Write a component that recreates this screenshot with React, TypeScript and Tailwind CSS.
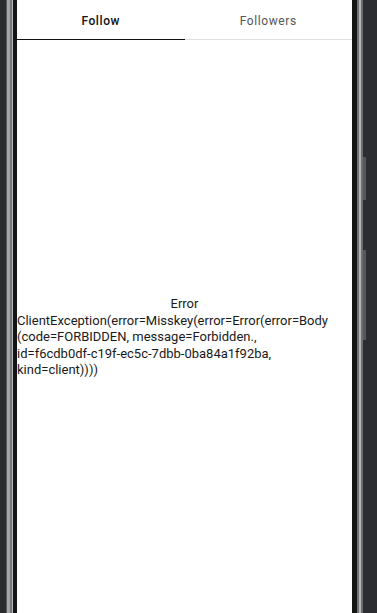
import React from 'react'

const errorLines = [
  'ClientException(error=Misskey(error=Error(error=Body',
  '(code=FORBIDDEN, message=Forbidden.,',
  'id=f6cdb0df-c19f-ec5c-7dbb-0ba84a1f92ba,',
  'kind=client))))',
]

const LeftBezel = () => (
  <div className="flex h-full shrink-0">
    <div className="w-[6px] bg-[#2b2c2f]" />
    <div className="w-[1px] bg-[#5a5b5d]" />
    <div className="w-[3px] bg-[#a4a5a6]" />
    <div className="w-[2px] bg-[#76777a]" />
    <div className="w-[1px] bg-[#b9babb]" />
    <div className="w-[4px] bg-[#151515]" />
  </div>
)

const RightBezel = () => (
  <div className="flex h-full shrink-0">
    <div className="w-[5px] bg-[#151515]" />
    <div className="w-[2px] bg-[#707174]" />
    <div className="w-[2px] bg-[#b4b5b6]" />
    <div className="w-[2px] bg-[#6c6d70]" />
    <div className="relative w-[14px] bg-[#2b2d30]">
      {/* side buttons */}
      <div className="absolute left-0 top-[157px] h-[43px] w-[3px] bg-[#55575a]" />
      <div className="absolute left-0 top-[250px] h-[90px] w-[3px] bg-[#55575a]" />
    </div>
  </div>
)

export default function App() {
  return (
    <div className="flex h-[613px] w-[377px] overflow-hidden bg-white" style={{ fontFamily: 'Roboto, "Noto Sans", sans-serif' }}>
      <LeftBezel />
      <div className="flex min-w-0 flex-1 flex-col bg-white">
        {/* Tabs */}
        <div className="flex h-[40px] shrink-0">
          <div className="flex flex-1 flex-col">
            <div className="flex flex-1 items-center justify-center pt-[2px] text-[12px] font-medium tracking-[0.6px] text-[#111]">
              Follow
            </div>
            <div className="h-[1px] bg-[#111]" />
          </div>
          <div className="flex flex-1 flex-col">
            <div className="flex flex-1 items-center justify-center pt-[2px] text-[12px] tracking-[0.6px] text-[#555]">
              Followers
            </div>
            <div className="h-[1px] bg-[#e0e0e0]" />
          </div>
        </div>

        {/* Body */}
        <div className="flex flex-1 flex-col pt-[256px] text-[13px] leading-[16.5px] text-[#1a1a1a]">
          <div className="text-center">Error</div>
          <div className="whitespace-nowrap">
            {errorLines.map((line) => (
              <div key={line}>{line}</div>
            ))}
          </div>
        </div>
      </div>
      <RightBezel />
    </div>
  )
}
